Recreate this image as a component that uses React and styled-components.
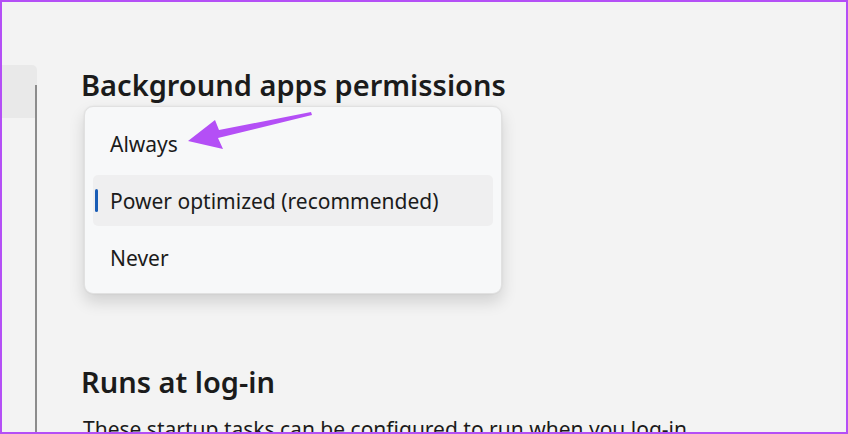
import styled, { createGlobalStyle } from "styled-components";

const GlobalStyle = createGlobalStyle`
  html, body {
    margin: 0;
    padding: 0;
    background: #f3f3f3;
  }
  * {
    box-sizing: border-box;
  }
`;

const Frame = styled.div`
  width: 848px;
  height: 434px;
  border: 2px solid #b44ff6;
  background: #f3f3f3;
  overflow: hidden;
  display: flex;
  font-family: "Noto Sans", "Open Sans", sans-serif;
  color: #1b1b1b;
`;

const Sidebar = styled.div`
  width: 35px;
  flex-shrink: 0;
  position: relative;
`;

const NavItem = styled.div`
  margin-top: 63px;
  height: 53px;
  width: 35px;
  background: #e9e9e9;
  border-top-right-radius: 5px;
`;

const ScrollLine = styled.div`
  position: absolute;
  left: 33px;
  top: 83px;
  bottom: 0;
  width: 2px;
  background: #8c8c8c;
`;

const Main = styled.main`
  flex: 1;
  padding-left: 44px;
  display: flex;
  flex-direction: column;

  & > * {
    flex-shrink: 0;
  }
`;

const Heading = styled.h2`
  margin: ${(p) => p.$top}px 0 0;
  font-size: ${(p) => p.$size}px;
  font-weight: 600;
  line-height: ${(p) => p.$size + 8}px;
  white-space: nowrap;
`;

const ControlArea = styled.div`
  position: relative;
  height: 198px;
  margin-top: 3px;
`;

const ComboBox = styled.div`
  margin: 66px 0 0 4px;
  width: 410px;
  height: 54px;
  border: 1px solid #d6d6d6;
  border-radius: 5px;
  background: #fbfbfb;
`;

const Underline = styled.div`
  margin: 60px 0 0 4px;
  width: 238px;
  height: 1px;
  background: #0f5cb8;
`;

const Menu = styled.ul`
  position: absolute;
  left: 3px;
  top: 0;
  width: 418px;
  margin: 0;
  list-style: none;
  padding: 11px 8px 10px;
  display: flex;
  flex-direction: column;
  gap: 6px;
  background: #f7f8f9;
  border: 1px solid #e1e1e1;
  border-radius: 9px;
  box-shadow: 0 8px 16px rgba(0, 0, 0, 0.14), 0 0 2px rgba(0, 0, 0, 0.08);
`;

const Option = styled.li`
  position: relative;
  height: 51px;
  display: flex;
  align-items: center;
  padding-left: 17px;
  border-radius: 5px;
  background: ${(p) => (p.$selected ? "#efeff0" : "transparent")};
  font-size: 21px;

  &::before {
    content: "";
    display: ${(p) => (p.$selected ? "block" : "none")};
    position: absolute;
    left: 2px;
    top: 14px;
    width: 3px;
    height: 23px;
    border-radius: 2px;
    background: #1a5db6;
  }
`;

const Arrow = styled.svg`
  position: absolute;
  left: 100px;
  top: 6px;
  overflow: visible;
  pointer-events: none;
`;

const Description = styled.p`
  margin: 15px 0 0 2px;
  font-size: 21px;
  line-height: 28px;
  white-space: nowrap;
`;

export default function App() {
  return (
    <>
      <GlobalStyle />
      <Frame>
        <Sidebar>
          <NavItem />
          <ScrollLine />
        </Sidebar>
        <Main>
          <Heading $top={64} $size={29}>
            Background apps permissions
          </Heading>
          <ControlArea>
            <ComboBox />
            <Underline />
            <Menu>
              <Option>Always</Option>
              <Option $selected>Power optimized (recommended)</Option>
              <Option>Never</Option>
            </Menu>
            <Arrow width="130" height="40" viewBox="0 0 130 40">
              {/* tip sits left of the tail */}
              <path
                d="M130 0 L38 18 L34 8 L7 29 L42 37 L37 26 L131 3 Z"
                fill="#b44ff6"
                strokeLinejoin="round"
              />
            </Arrow>
          </ControlArea>
          <Heading $top={59} $size={29}>
            Runs at log-in
          </Heading>
          <Description>
            These startup tasks can be configured to run when you log-in.
          </Description>
        </Main>
      </Frame>
    </>
  );
}
